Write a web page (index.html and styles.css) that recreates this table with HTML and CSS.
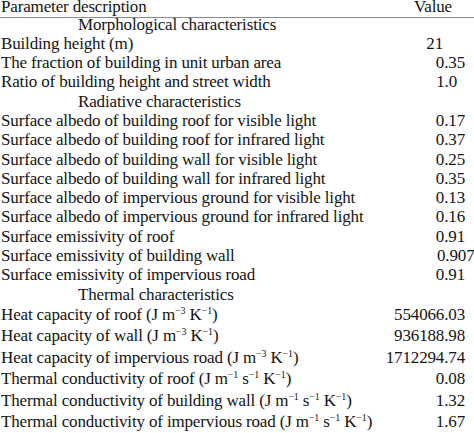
FILE: index.html
```html
<!DOCTYPE html>
<html>
<head>
<meta charset="utf-8">
<link rel="stylesheet" href="styles.css">
</head>
<body>
<div class="table">
  <div class="row head">
    <div class="desc">Parameter description</div>
    <div class="val v-head">Value</div>
  </div>
  <div class="body">
    <div class="row section"><div class="desc">Morphological characteristics</div></div>
    <div class="row"><div class="desc">Building height (m)</div><div class="val v-21">21</div></div>
    <div class="row"><div class="desc">The fraction of building in unit urban area</div><div class="val">0.35</div></div>
    <div class="row"><div class="desc">Ratio of building height and street width</div><div class="val v-10">1.0</div></div>
    <div class="row section"><div class="desc">Radiative characteristics</div></div>
    <div class="row"><div class="desc">Surface albedo of building roof for visible light</div><div class="val">0.17</div></div>
    <div class="row"><div class="desc">Surface albedo of building roof for infrared light</div><div class="val">0.37</div></div>
    <div class="row"><div class="desc">Surface albedo of building wall for visible light</div><div class="val">0.25</div></div>
    <div class="row"><div class="desc">Surface albedo of building wall for infrared light</div><div class="val">0.35</div></div>
    <div class="row"><div class="desc">Surface albedo of impervious ground for visible light</div><div class="val">0.13</div></div>
    <div class="row"><div class="desc">Surface albedo of impervious ground for infrared light</div><div class="val">0.16</div></div>
    <div class="row"><div class="desc">Surface emissivity of roof</div><div class="val">0.91</div></div>
    <div class="row"><div class="desc">Surface emissivity of building wall</div><div class="val v-left">0.907</div></div>
    <div class="row"><div class="desc">Surface emissivity of impervious road</div><div class="val">0.91</div></div>
    <div class="row section"><div class="desc">Thermal characteristics</div></div>
    <div class="row tall"><div class="desc">Heat capacity of roof (J m<sup>&minus;3</sup> K<sup>&minus;1</sup>)</div><div class="val">554066.03</div></div>
    <div class="row tall"><div class="desc">Heat capacity of wall (J m<sup>&minus;3</sup> K<sup>&minus;1</sup>)</div><div class="val">936188.98</div></div>
    <div class="row tall"><div class="desc">Heat capacity of impervious road (J m<sup>&minus;3</sup> K<sup>&minus;1</sup>)</div><div class="val">1712294.74</div></div>
    <div class="row tall"><div class="desc">Thermal conductivity of roof (J m<sup>&minus;1</sup> s<sup>&minus;1</sup> K<sup>&minus;1</sup>)</div><div class="val">0.08</div></div>
    <div class="row tall"><div class="desc">Thermal conductivity of building wall (J m<sup>&minus;1</sup> s<sup>&minus;1</sup> K<sup>&minus;1</sup>)</div><div class="val">1.32</div></div>
    <div class="row tall"><div class="desc">Thermal conductivity of impervious road (J m<sup>&minus;1</sup> s<sup>&minus;1</sup> K<sup>&minus;1</sup>)</div><div class="val">1.67</div></div>
  </div>
</div>
</body>
</html>
```
FILE: styles.css
```css
html, body {
  margin: 0;
  padding: 0;
  background: #ffffff;
  overflow: hidden;
}
body {
  width: 474px;
  height: 433px;
  font-family: "Liberation Serif", "Times New Roman", serif;
  font-size: 17px;
  letter-spacing: -0.15px;
  color: #141414;
}
.row {
  display: flex;
  line-height: 19.3px;
  height: 19.3px;
  white-space: nowrap;
}
.row.tall {
  line-height: 21.5px;
  height: 21.5px;
}
.row.head {
  line-height: 14px;
  height: 17px;
  border-bottom: 1px solid #8a8a8a;
}
.body {
  margin-top: -3.5px;
}
.desc {
  flex: 1;
  padding-left: 1px;
}
.section .desc {
  padding-left: 78px;
}
.val {
  width: 90px;
  text-align: right;
  padding-right: 9px;
  box-sizing: border-box;
}
.val.v-head { padding-right: 22px; }
.val.v-21 { padding-right: 31px; }
.val.v-10 { padding-right: 17px; }
.val.v-left {
  text-align: left;
  padding-left: 53px;
  padding-right: 0;
}
sup {
  font-size: 10px;
  line-height: 0;
  vertical-align: 6px;
}
```
